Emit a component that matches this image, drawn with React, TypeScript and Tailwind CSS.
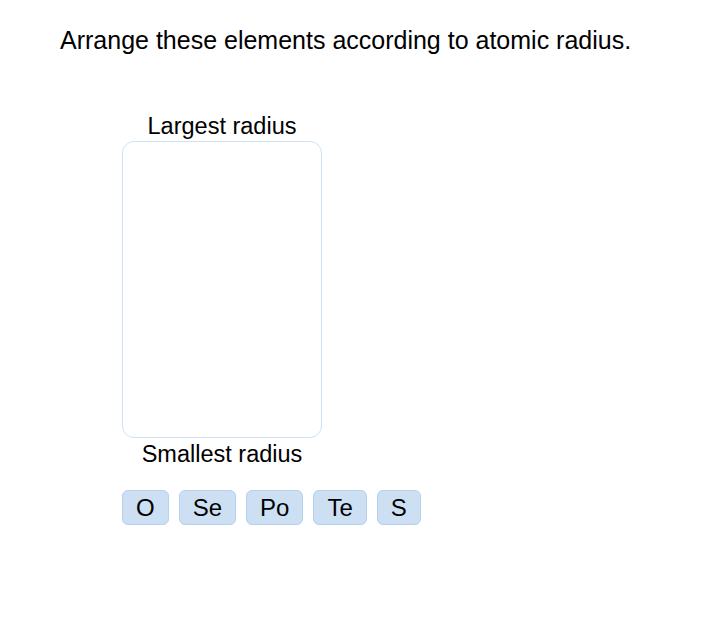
const elements = ['O', 'Se', 'Po', 'Te', 'S'];

export default function App() {
  return (
    <div className="w-[720px] h-[620px] bg-white text-black font-['Liberation_Sans',Arial,sans-serif]">
      <h1 className="pt-[25px] pl-[60px] text-[25px] leading-[30px]">
        Arrange these elements according to atomic radius.
      </h1>

      <div className="ml-[122px] mt-[57px] flex w-[200px] flex-col items-center">
        <div className="text-[23.5px] leading-[28px]">Largest radius</div>
        <div className="mt-[1px] h-[297px] w-[200px] rounded-[12px] border border-[#cfe1f3] bg-white" />
        <div className="mt-[2px] text-[23.5px] leading-[28px]">Smallest radius</div>
      </div>

      <div className="ml-[122px] mt-[22px] flex gap-[10px]">
        {elements.map((el) => (
          <div
            key={el}
            className="flex h-[35px] items-center rounded-[6px] border border-[#b5d1ee] bg-[#cde0f3] px-[13px] text-[24px] leading-none"
          >
            {el}
          </div>
        ))}
      </div>
    </div>
  );
}
